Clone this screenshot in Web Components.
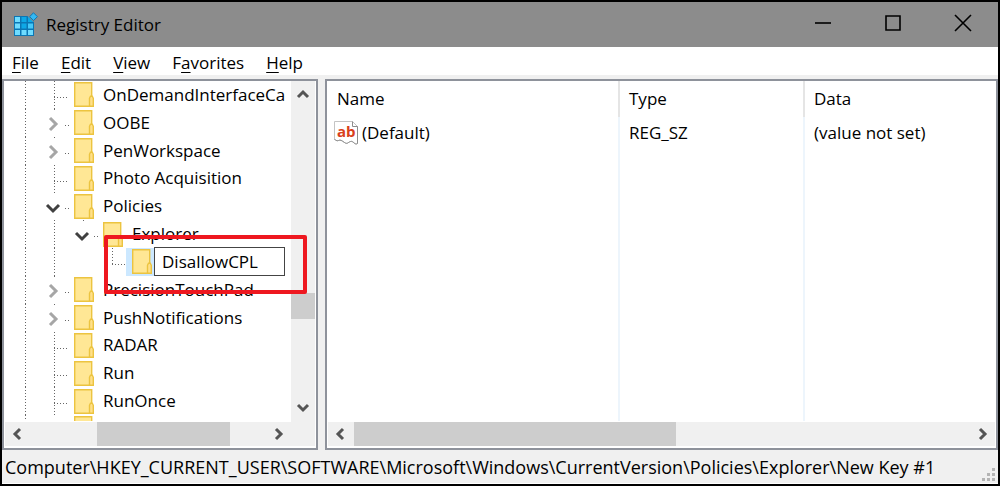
<!DOCTYPE html>
<html lang="en">
<head>
<meta charset="utf-8">
<meta name="viewport" content="width=device-width, initial-scale=1">
<title>Registry Editor</title>
<style>
    body{
        margin: 0;
        color: #000;
        background-color: #f0f0f0;
        font: 17px/24px "Open Sans", "Noto Sans", sans-serif;
    }
</style>
</head>
<body>
<reg-window></reg-window>

<script>
// BARRA DE TÍTULO ----------------------------------------------------------------------------

/** Barra superior con el icono, el título y los controles de la ventana. */
class RegTitlebar extends HTMLElement{

    constructor(){
        super();
        this.attachShadow({mode: 'open'});
    }

    connectedCallback() {
        this.render();
    }

    /** Define y renderiza en pantalla el elemento. */
    render(){
        const style = `
            <style>
                :host{
                    display: flex;
                    align-items: center;
                    height: 45px;
                    padding-left: 11px;
                    background-color: #8c8c8c;
                }
                .icon{ width: 26px; height: 26px; }
                h1{
                    flex: 1;
                    margin: 0 0 0 7px;
                    font-size: 17px;
                    font-weight: 400;
                }
                button{
                    display: grid;
                    place-items: center;
                    width: 70px;
                    height: 42px;
                    margin-bottom: 3px;
                    padding: 0;
                    border: 0;
                    background: none;
                }
                button svg{ fill: none; stroke: #000; stroke-width: 1.6; }
            </style>
        `;
        const body = `
            <svg class="icon" viewBox="0 0 26 26" aria-hidden="true">
                <path fill="#0b76b4" d="M1 4h20v20H1z"/>
                <path fill="#6fdcff" d="M2 5h5v5H2zM2 11.5h5v5H2zM2 18h5v5H2zM8.5 18h5v5h-5zM15 18h5v5h-5z"/>
                <path fill="#0ea8e6" d="M8.5 5h5v5h-5zM15 5h5v5h-5zM8.5 11.5h5v5h-5z"/>
                <path fill="#45c8f8" d="M15 11.5h5v5h-5z"/>
                <path fill="#8c8c8c" d="M14.5 4L20-1.5l5.5 6L20.5 10z"/>
                <path fill="#35b9f3" stroke="#0b76b4" d="M20.5.8l3.9 3.9-3.9 3.9-3.9-3.9z"/>
            </svg>
            <h1><slot></slot></h1>
            <button aria-label="Minimize"><svg width="18" height="18"><path d="M1 9h16"/></svg></button>
            <button aria-label="Maximize"><svg width="18" height="18"><path d="M2 2h14v14H2z"/></svg></button>
            <button aria-label="Close"><svg width="18" height="18"><path d="M1 1l16 16M17 1L1 17"/></svg></button>
        `;

        this.shadowRoot.innerHTML = style + body;
    }
}

customElements.define('reg-titlebar', RegTitlebar);


// BARRA DE MENÚ ------------------------------------------------------------------------------

/** Menú principal. Cada entrada guarda la posición de su tecla de acceso. */
class RegMenubar extends HTMLElement{

    /** Entradas del menú >> [texto, posición de la letra subrayada]. */
    items = [['File', 0], ['Edit', 0], ['View', 0], ['Favorites', 1], ['Help', 0]]

    constructor(){
        super();
        this.attachShadow({mode: 'open'});
    }

    connectedCallback() {
        this.render();
    }

    render(){
        const style = `
            <style>
                :host{ display: block; background-color: #fff; border-bottom: 4px solid #f0f0f0; }
                nav{ display: flex; gap: 22px; padding: 4px 10px 0; }
                button{
                    padding: 0;
                    border: 0;
                    background: none;
                    color: inherit;
                    font: inherit;
                }
                u{ text-underline-offset: 3px; text-decoration-skip-ink: none; }
            </style>
        `;
        const body = this.items.map(([text, key]) =>
            `<button>${text.slice(0, key)}<u>${text[key]}</u>${text.slice(key + 1)}</button>`
        ).join('');

        this.shadowRoot.innerHTML = style + `<nav>${body}</nav>`;
    }
}

customElements.define('reg-menubar', RegMenubar);


// BARRA DE DESPLAZAMIENTO --------------------------------------------------------------------

/**
 * Barra de desplazamiento.
 * **parts** define las proporciones: espacio previo, tirador y espacio posterior.
 */
class RegScrollbar extends HTMLElement{

    constructor(){
        super();
        this.attachShadow({mode: 'open'});
    }

    connectedCallback() {
        this.render();
    }

    render(){
        const vertical = this.hasAttribute('vertical');
        const [before, thumb, after] = this.getAttribute('parts').split(' ');
        const arrows = vertical
            ? ['M3 11l5-5 5 5', 'M3 5l5 5 5-5']
            : ['M10 3L5 8l5 5', 'M6 3l5 5-5 5'];
        const names = vertical ? ['Scroll up', 'Scroll down'] : ['Scroll left', 'Scroll right'];
        const style = `
            <style>
                :host{
                    display: flex;
                    flex-direction: ${vertical ? 'column' : 'row'};
                    min-width: 24px;
                    min-height: 24px;
                    background-color: #f0f0f0;
                }
                button{
                    display: grid;
                    place-items: center;
                    flex: 0 0 26px;
                    min-width: 23px;
                    min-height: 24px;
                    padding: 0;
                    border: 0;
                    background: none;
                }
                svg{ fill: none; stroke: #555; stroke-width: 3; }
                .before{ flex: ${before} 0 0px; }
                .thumb{ flex: ${thumb} 0 0px; background-color: #cdcdcd; }
                .after{ flex: ${after} 0 0px; }
            </style>
        `;
        const button = i => `
            <button aria-label="${names[i]}">
                <svg width="16" height="16"><path d="${arrows[i]}"/></svg>
            </button>
        `;
        const body = `
            ${button(0)}
            <div class="before"></div><div class="thumb"></div><div class="after"></div>
            ${button(1)}
        `;

        this.shadowRoot.innerHTML = style + body;
    }
}

customElements.define('reg-scrollbar', RegScrollbar);


// ÁRBOL DE CLAVES ----------------------------------------------------------------------------

/** Fila del árbol: líneas guía, carpeta y nombre de la clave. */
class RegKey extends HTMLElement{

    constructor(){
        super();
        this.attachShadow({mode: 'open'});
    }

    connectedCallback() {
        this.render();
    }

    /** Devuelve las celdas guía. l = línea, e = vacía, b = rama, c = cerrada, o = abierta, f = final. */
    getGuides(){
        const chevrons = {
            c: '<button class="closed" aria-label="Expand"><svg width="16" height="16"><path d="M5 2l6 6-6 6"/></svg></button>',
            o: '<button class="opened" aria-label="Collapse"><svg width="16" height="16"><path d="M2 5l6 6 6-6"/></svg></button>',
        };
        return [...this.getAttribute('guides')].map(type =>
            `<span class="cell ${type}">${chevrons[type] || ''}</span>`
        ).join('');
    }

    render(){
        const style = `
            <style>
                :host{
                    display: flex;
                    align-items: stretch;
                    min-height: 0;
                    min-width: 0;
                    --dots-v: repeating-linear-gradient(#666 0 1px, transparent 1px 3px);
                    --dots-h: repeating-linear-gradient(90deg, #666 0 1px, transparent 1px 3px);
                }
                :host([cut]){ overflow: hidden; }
                .cell{
                    box-sizing: border-box;
                    display: grid;
                    place-items: center;
                    flex: 0 0 29px;
                    padding: 3px 3px 0 0;
                    background-repeat: no-repeat;
                }
                .l{ background-image: var(--dots-v); background-size: 1px 100%; background-position: 14px 0; }
                .b{
                    background-image: var(--dots-v), var(--dots-h);
                    background-size: 1px 100%, 15px 1px;
                    background-position: 14px 0, 14px 60%;
                }
                .f{
                    background-image: var(--dots-v), var(--dots-h);
                    background-size: 1px 60%, 15px 1px;
                    background-position: 14px 0, 14px 60%;
                }
                .c, .o{
                    background-image: linear-gradient(#666, #666), var(--dots-h);
                    background-size: 1px 1px, 4px 1px;
                    background-position: 14px 0, 25px 60%;
                }
                button{ display: flex; padding: 0; border: 0; background: none; }
                svg{ fill: none; stroke-width: 3; }
                .closed svg{ stroke: #a6a6a6; }
                .opened svg{ stroke: #404040; }
                .folder{
                    display: flex;
                    align-items: center;
                    flex: none;
                    padding-left: 5px;
                }
                .folder svg{ stroke: #ecc440; stroke-width: 1.4; }
                :host([cut]) .folder{ align-items: flex-start; padding-top: 1px; }
                :host([editing]) .folder{
                    margin-left: -1px;
                    padding: 0 2px 0 6px;
                    background-color: #cce8ff;
                }
                .name{ padding-left: 9px; overflow: hidden; white-space: nowrap; align-self: center; }
                input{
                    box-sizing: border-box;
                    width: 131px;
                    height: 29px;
                    margin: -1px 0;
                    padding: 0 0 0 7px;
                    border: 1px solid #444;
                    outline: 0;
                    border-radius: 0;
                    background-color: #fff;
                    color: inherit;
                    font: inherit;
                    align-self: center;
                }
            </style>
        `;
        const name = this.hasAttribute('editing')
            ? '<input aria-label="Key name" value="DisallowCPL">'
            : '<span class="name"><slot></slot></span>';
        const body = `
            ${this.getGuides()}
            <span class="folder">
                <svg width="20" height="25" aria-hidden="true">
                    <path fill="#ffe795" d="M.7.7h17v23.6H.7z"/>
                    <path fill="#ffe08a" d="M15.5 24.3v-8l1-2h1.8l1 2v8z"/>
                </svg>
            </span>
            ${name}
        `;

        this.shadowRoot.innerHTML = style + body;
    }
}

customElements.define('reg-key', RegKey);


/** Árbol de claves. Las filas se reparten la altura disponible. */
class RegTree extends HTMLElement{

    constructor(){
        super();
        this.attachShadow({mode: 'open'});
    }

    connectedCallback() {
        this.render();
    }

    render(){
        const style = `
            <style>
                :host{
                    display: grid;
                    grid-template-columns: minmax(0, 1fr);
                    grid-template-rows: repeat(12, minmax(0, 1fr)) 6px;
                    padding-left: 6px;
                }
                .marked{ position: relative; z-index: 1; display: grid; }
                /* Recuadro rojo sobre la clave nueva */
                .mark{
                    position: absolute;
                    box-sizing: border-box;
                    left: 93px;
                    top: -13px;
                    width: 203px;
                    height: 59px;
                    border: 4px solid #ee1820;
                    border-radius: 2px;
                    pointer-events: none;
                }
            </style>
        `;
        const body = `
            <reg-key guides="lb">OnDemandInterfaceCa</reg-key>
            <reg-key guides="lc">OOBE</reg-key>
            <reg-key guides="lc">PenWorkspace</reg-key>
            <reg-key guides="lb">Photo Acquisition</reg-key>
            <reg-key guides="lo">Policies</reg-key>
            <reg-key guides="llo">Explorer</reg-key>
            <div class="marked">
                <reg-key guides="llef" editing></reg-key>
                <div class="mark"></div>
            </div>
            <reg-key guides="lc">PrecisionTouchPad</reg-key>
            <reg-key guides="lc">PushNotifications</reg-key>
            <reg-key guides="lb">RADAR</reg-key>
            <reg-key guides="lb">Run</reg-key>
            <reg-key guides="lb">RunOnce</reg-key>
            <reg-key guides="le" cut></reg-key>
        `;

        this.shadowRoot.innerHTML = style + body;
    }
}

customElements.define('reg-tree', RegTree);


// LISTA DE VALORES ---------------------------------------------------------------------------

/** Tabla con los valores de la clave seleccionada. */
class RegValues extends HTMLElement{

    constructor(){
        super();
        this.attachShadow({mode: 'open'});
    }

    connectedCallback() {
        this.render();
    }

    render(){
        const style = `
            <style>
                :host{ display: block; }
                table{
                    width: 100%;
                    height: 100%;
                    border-collapse: collapse;
                    table-layout: fixed;
                }
                .name{ width: 291px; }
                .type{ width: 185px; }
                th, td{
                    box-sizing: border-box;
                    padding: 0 9px;
                    border-right: 2px solid #edf5fc;
                    text-align: left;
                    font-weight: 400;
                    white-space: nowrap;
                }
                th{ height: 36px; border-right-color: #e5e5e5; }
                td{ height: 32px; }
                th:last-child, td:last-child{ border-right: 0; }
                .rest td{ height: auto; }
                .value{ display: flex; align-items: center; gap: 3px; margin-left: -3px; }
                svg{ flex: none; overflow: visible; }
            </style>
        `;
        const body = `
            <table>
                <colgroup><col class="name"><col class="type"><col></colgroup>
                <thead>
                    <tr><th>Name</th><th>Type</th><th>Data</th></tr>
                </thead>
                <tbody>
                    <tr>
                        <td>
                            <span class="value">
                                <svg width="25" height="25" aria-hidden="true">
                                    <path fill="#fff" stroke="#c4c4c4" d="M.5.5h18l5 5v17c-3 2-4-3-7-2s-3 3-6 1-4-3-6-2-3-1-4-1z"/>
                                    <path fill="none" stroke="#8c8c8c" d="M18.5.5v5h5v17c-3 2-4-3-7-2s-3 3-6 1-4-3-6-2-3-1-4-1"/>
                                    <text x="3" y="16" font-size="15" font-weight="700" fill="#d9401c">ab</text>
                                </svg>
                                <span>(Default)</span>
                            </span>
                        </td>
                        <td>REG_SZ</td>
                        <td>(value not set)</td>
                    </tr>
                    <tr class="rest"><td></td><td></td><td></td></tr>
                </tbody>
            </table>
        `;

        this.shadowRoot.innerHTML = style + body;
    }
}

customElements.define('reg-values', RegValues);


// BARRA DE ESTADO ----------------------------------------------------------------------------

/** Muestra la ruta de la clave seleccionada. */
class RegStatus extends HTMLElement{

    constructor(){
        super();
        this.attachShadow({mode: 'open'});
    }

    connectedCallback() {
        this.render();
    }

    render(){
        const style = `
            <style>
                :host{
                    display: flex;
                    align-items: center;
                    justify-content: space-between;
                    height: 33px;
                    padding: 0 3px;
                    border-bottom: 1px solid #fff;
                    font-size: 18px;
                    white-space: nowrap;
                    overflow: hidden;
                }
                svg{ align-self: flex-end; flex: none; fill: #b4b4b4; margin-bottom: 2px; }
            </style>
        `;
        const body = `
            <span><slot></slot></span>
            <svg width="13" height="13" aria-hidden="true">
                <path d="M10 0h3v3h-3zM5 5h3v3H5zM10 5h3v3h-3zM0 10h3v3H0zM5 10h3v3H5zM10 10h3v3h-3z"/>
            </svg>
        `;

        this.shadowRoot.innerHTML = style + body;
    }
}

customElements.define('reg-status', RegStatus);


// VENTANA ------------------------------------------------------------------------------------

/** Ventana principal de la aplicación. */
class RegWindow extends HTMLElement{

    constructor(){
        super();
        this.attachShadow({mode: 'open'});
    }

    connectedCallback() {
        this.render();
    }

    render(){
        const style = `
            <style>
                :host{
                    box-sizing: border-box;
                    display: flex;
                    flex-direction: column;
                    min-height: 100vh;
                    border: 2px solid #000;
                }
                main{
                    flex: 1;
                    display: grid;
                    grid-template-columns: minmax(0, 316fr) minmax(0, 673fr);
                    column-gap: 7px;
                }
                section{
                    display: grid;
                    grid-template-rows: minmax(0, 1fr) 24px;
                    row-gap: 1px;
                    padding: 0 1px 2px;
                    border: 2px solid #8e929b;
                    background-color: #fff;
                }
                .keys{ grid-template-columns: minmax(0, 1fr) 24px; }
                .corner{ margin-top: -1px; background-color: #f0f0f0; }
            </style>
        `;
        const body = `
            <reg-titlebar>Registry Editor</reg-titlebar>
            <reg-menubar></reg-menubar>
            <main>
                <section class="keys">
                    <reg-tree></reg-tree>
                    <reg-scrollbar vertical parts="185 26 76"></reg-scrollbar>
                    <reg-scrollbar parts="66 132 35"></reg-scrollbar>
                    <div class="corner"></div>
                </section>
                <section>
                    <reg-values></reg-values>
                    <reg-scrollbar parts="0 323 293"></reg-scrollbar>
                </section>
            </main>
            <reg-status>Computer\\HKEY_CURRENT_USER\\SOFTWARE\\Microsoft\\Windows\\CurrentVersion\\Policies\\Explorer\\New Key #1</reg-status>
        `;

        this.shadowRoot.innerHTML = style + body;
    }
}

customElements.define('reg-window', RegWindow);
</script>
</body>
</html>
